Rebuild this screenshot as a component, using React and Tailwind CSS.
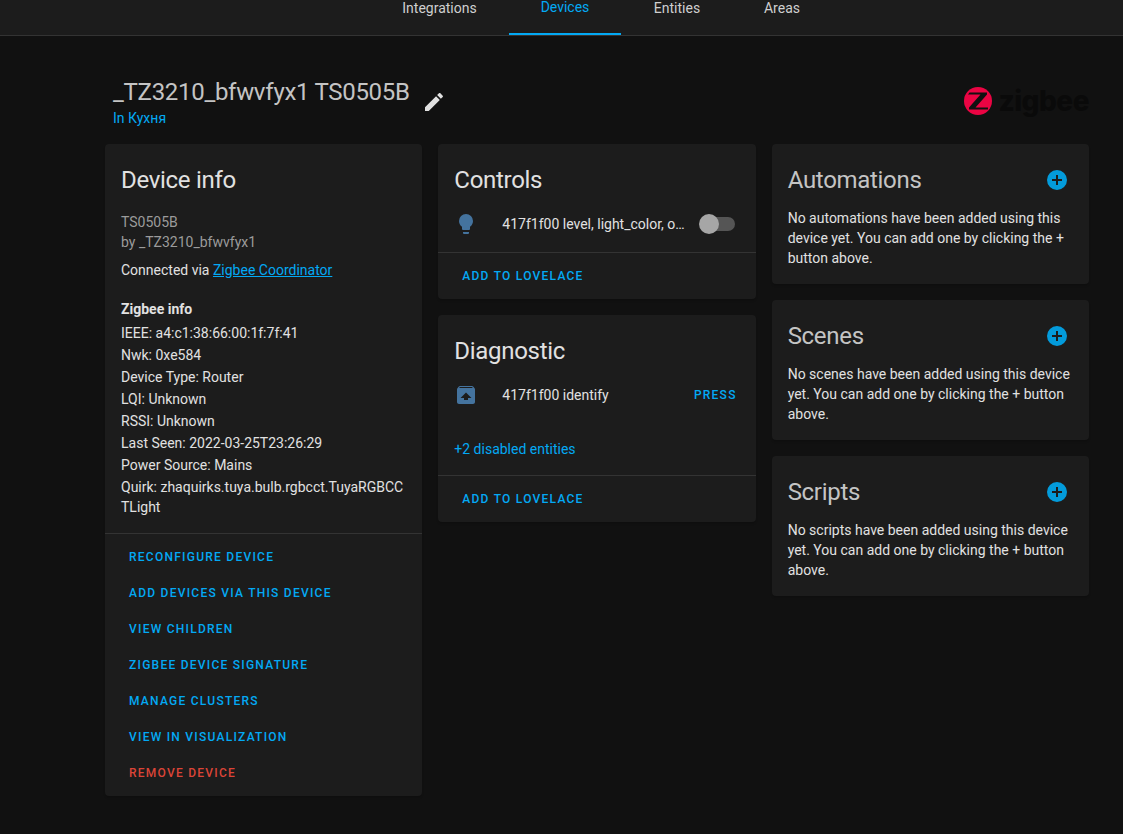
const PENCIL = 'M20.71,7.04C21.1,6.65 21.1,6 20.71,5.63L18.37,3.29C18,2.9 17.35,2.9 16.96,3.29L15.12,5.12L18.87,8.87M3,17.25V21H6.75L17.81,9.93L14.06,6.18L3,17.25Z';
const BULB = 'M12,2A7,7 0 0,0 5,9C5,11.38 6.19,13.47 8,14.74V17A1,1 0 0,0 9,18H15A1,1 0 0,0 16,17V14.74C17.81,13.47 19,11.38 19,9A7,7 0 0,0 12,2M9,21A1,1 0 0,0 10,22H14A1,1 0 0,0 15,21V20H9V21Z';
const ARCHIVE = 'M20.55 5.22L19.16 3.54C18.88 3.21 18.47 3 18 3H6C5.53 3 5.12 3.21 4.85 3.55L3.46 5.22C3.17 5.57 3 6 3 6.5V19C3 20.11 3.9 21 5 21H19C20.11 21 21 20.11 21 19V6.5C21 6 20.83 5.57 20.55 5.22M12 9.5L17.5 15H14V17H10V15H6.5L12 9.5M5.12 5L5.93 4H17.93L18.87 5H5.12Z';
const PLUS = 'M17,13H13V17H11V13H7V11H11V7H13V11H17M12,2A10,10 0 0,0 2,12A10,10 0 0,0 12,22A10,10 0 0,0 22,12A10,10 0 0,0 12,2Z';

const Icon = ({ d, className }) => (
    <svg viewBox="0 0 24 24" className={`w-6 h-6 fill-current shrink-0 ${className}`}>
        <path d={d} />
    </svg>
);

const Card = ({ children }) => (
    <div className="bg-[#1c1c1c] rounded shadow-[0_2px_2px_rgba(0,0,0,0.14)]">{children}</div>
);

const CardTitle = ({ children, dim }) => (
    <h2 className={`pt-5 px-4 text-2xl leading-8 tracking-[-0.3px] ${dim ? 'text-[#c4c4c4]' : 'text-[#e1e1e1]'}`}>{children}</h2>
);

const ActionButton = ({ children, danger }) => (
    <div className={`h-9 flex items-center text-xs font-medium tracking-[1.25px] uppercase ${danger ? 'text-[#db4437]' : 'text-[#03a9f4]'}`}>
        {children}
    </div>
);

const RelatedCard = ({ title, kind }) => (
    <Card>
        <div className="flex items-center justify-between pr-[20px]">
            <CardTitle dim>{title}</CardTitle>
            <Icon d={PLUS} className="text-[#039bdb] mt-5" />
        </div>
        <p className="px-4 pt-3 pb-4 text-sm leading-5 text-[#e1e1e1]">{kind}</p>
    </Card>
);

export default function App() {
    const zigbeeRows = [
        'IEEE: a4:c1:38:66:00:1f:7f:41',
        'Nwk: 0xe584',
        'Device Type: Router',
        'LQI: Unknown',
        'RSSI: Unknown',
        'Last Seen: 2022-03-25T23:26:29',
        'Power Source: Mains',
        'Quirk: zhaquirks.tuya.bulb.rgbcct.TuyaRGBCCTLight',
    ];
    const actions = [
        'Reconfigure device',
        'Add devices via this device',
        'View children',
        'Zigbee device signature',
        'Manage clusters',
        'View in visualization',
    ];

    return (
        <div className="min-h-[834px] bg-[#111111] font-['Roboto',sans-serif] text-sm text-[#e1e1e1] overflow-hidden">
            {/* Tabs */}
            <div className="h-9 bg-[#1c1c1c] border-b border-[#333333] pl-[374px]">
                <div className="flex h-9 text-sm leading-4">
                    <div className="w-[131px] mr-1 text-center text-[#cfcfcf]">Integrations</div>
                    <div className="w-[112px] h-9 text-center text-[#03a9f4] border-b-2 border-[#03a9f4] -mt-px">Devices</div>
                    <div className="w-[112px] text-center text-[#cfcfcf]">Entities</div>
                    <div className="w-[98px] text-center text-[#cfcfcf]">Areas</div>
                </div>
            </div>

            <div className="ml-[105px] w-[984px]">
                {/* Device header */}
                <div className="h-[108px] flex items-start justify-between">
                    <div className="pl-2 pt-[42px] flex">
                        <div>
                            <h1 className="text-2xl leading-7 tracking-[-0.3px] text-[#c4c4c4] whitespace-nowrap">_TZ3210_bfwvfyx1 TS0505B</h1>
                            <div className="text-sm leading-4 mt-1 text-[#03a9f4]">In Кухня</div>
                        </div>
                        <Icon d={PENCIL} className="text-[#e1e1e1] ml-[12px] mt-3" />
                    </div>
                    <div className="flex items-center pt-[51px]">
                        <svg viewBox="0 0 28 28" className="w-7 h-7 shrink-0">
                            <circle cx="14" cy="14" r="14" fill="#eb0443" />
                            <path d="M5.5 5.5H23V7.5L11.5 20.5H24V22.5H5V20.5L16.5 7.5H4Z" fill="#111111" />
                        </svg>
                        <span className="ml-[6px] font-['Inter',sans-serif] font-extrabold text-[28px] leading-7 tracking-[-0.5px] text-[#0a0a0a]">zigbee</span>
                    </div>
                </div>

                <div className="grid grid-cols-3 gap-4 items-start">
                    {/* Device info */}
                    <Card>
                        <CardTitle>Device info</CardTitle>
                        <div className="px-4 pt-4 pb-[14px]">
                            <div className="leading-5 text-[#9b9b9b]">TS0505B</div>
                            <div className="leading-5 text-[#9b9b9b]">by _TZ3210_bfwvfyx1</div>
                            <div className="leading-5 mt-2">
                                Connected via <a className="underline text-[#03a9f4]">Zigbee Coordinator</a>
                            </div>
                            <div className="font-bold leading-5 mt-[19px] mb-[4px]">Zigbee info</div>
                            {zigbeeRows.map((row) => (
                                <div key={row} className="leading-5 mb-[2px] break-all">{row}</div>
                            ))}
                        </div>
                        <div className="border-t border-[#333333] px-6 py-[5px]">
                            {actions.map((action) => (
                                <ActionButton key={action}>{action}</ActionButton>
                            ))}
                            <ActionButton danger>Remove device</ActionButton>
                        </div>
                    </Card>

                    {/* Controls + diagnostic */}
                    <div className="flex flex-col gap-4">
                        <Card>
                            <CardTitle>Controls</CardTitle>
                            <div className="flex items-center h-10 px-4 mt-2">
                                <Icon d={BULB} className="text-[#44739e]" />
                                <div className="ml-[24px] w-[185px] truncate">417f1f00 level, light_color, on_off</div>
                                <div className="relative ml-auto w-[34px] h-[14px] mr-[5px] rounded-full bg-[#555555]">
                                    <div className="absolute -left-[2px] -top-[3px] w-5 h-5 rounded-full bg-[#a6a6a6]" />
                                </div>
                            </div>
                            <div className="mt-2 border-t border-[#333333] px-6 py-[5px]">
                                <ActionButton>Add to Lovelace</ActionButton>
                            </div>
                        </Card>
                        <Card>
                            <CardTitle>Diagnostic</CardTitle>
                            <div className="flex items-center h-10 px-4 mt-2">
                                <Icon d={ARCHIVE} className="text-[#44739e]" />
                                <div className="ml-[24px]">417f1f00 identify</div>
                                <div className="ml-auto mr-[3px] text-xs font-medium tracking-[1.25px] text-[#03a9f4]">PRESS</div>
                            </div>
                            <div className="px-4 pt-[24px] pb-[16px] leading-5 text-[#03a9f4]">+2 disabled entities</div>
                            <div className="border-t border-[#333333] px-6 py-[5px]">
                                <ActionButton>Add to Lovelace</ActionButton>
                            </div>
                        </Card>
                    </div>

                    {/* Related */}
                    <div className="flex flex-col gap-4">
                        <RelatedCard title="Automations" kind="No automations have been added using this device yet. You can add one by clicking the + button above." />
                        <RelatedCard title="Scenes" kind="No scenes have been added using this device yet. You can add one by clicking the + button above." />
                        <RelatedCard title="Scripts" kind="No scripts have been added using this device yet. You can add one by clicking the + button above." />
                    </div>
                </div>
            </div>
        </div>
    );
}
